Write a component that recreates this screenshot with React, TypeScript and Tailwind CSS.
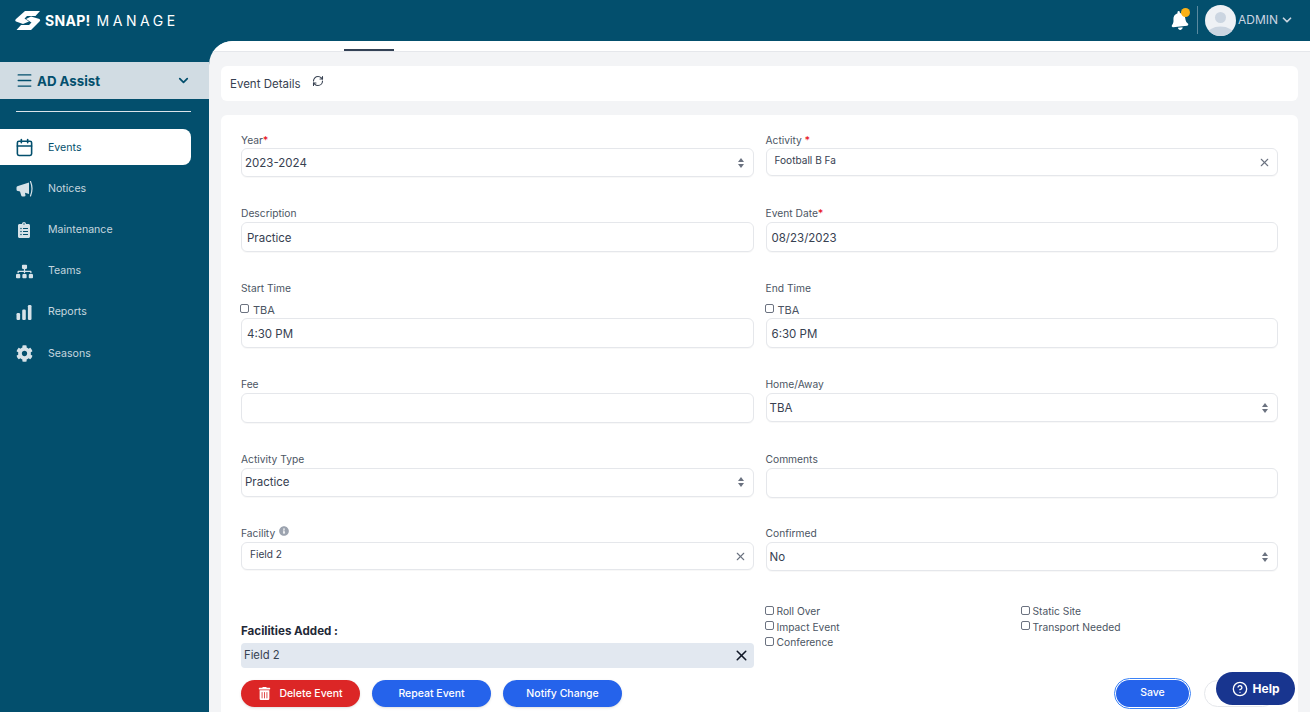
import { ReactNode } from "react";
import { Calendar, ChevronDown, CircleHelp, Menu, RefreshCw, X } from "lucide-react";
import { FaBell, FaClipboardList, FaCog, FaInfoCircle, FaSitemap, FaTrashAlt } from "react-icons/fa";

function Horn() {
  return (
    <svg width="17" height="16" viewBox="0 0 17 16" fill="currentColor">
      <path d="M0.5 6.5 Q0.5 5 2 5 L13 1.5 V13 L9 11.8 L9.5 14.5 Q9.5 15.5 8 15.5 L6.5 15.5 Q5.5 15.5 5.2 14.5 L4 10.5 L2 10 Q0.5 10 0.5 8.5 Z" />
      <path d="M14.5 0.5 Q17.5 7.5 14.5 15" fill="none" stroke="currentColor" strokeWidth="1.2" strokeLinecap="round" />
    </svg>
  );
}

function Bars() {
  return (
    <svg width="16" height="15" viewBox="0 0 16 15" fill="currentColor">
      <rect x="0.5" y="8" width="3.6" height="7" rx="1.2" />
      <rect x="6.2" y="4.5" width="3.6" height="10.5" rx="1.2" />
      <rect x="11.9" y="0" width="3.6" height="15" rx="1.2" />
    </svg>
  );
}

const navItems = [
  { label: "Notices", icon: <Horn /> },
  { label: "Maintenance", icon: <FaClipboardList size={16} /> },
  { label: "Teams", icon: <FaSitemap size={17} /> },
  { label: "Reports", icon: <Bars /> },
  { label: "Seasons", icon: <FaCog size={17} /> },
];

function Logo() {
  return (
    <svg width="26" height="19" viewBox="0 0 26 19" fill="white">
      <path d="M10 0 H25 L20.5 5 H12 L9.5 7.5 L14 10.5 L8 13 L1 10.5 Q-0.5 9.5 1 8 Z" />
      <path d="M16 5.5 L24.5 8 Q26 9 24.5 10.5 L16 19 H1.5 L6 14 H14 L16.5 11.5 L11 8 Z" />
    </svg>
  );
}

function Avatar() {
  return (
    <svg width="31" height="31" viewBox="0 0 31 31" className="rounded-full bg-[#eef1f5]">
      <circle cx="15.5" cy="12.5" r="5.5" fill="#cbd5e1" />
      <ellipse cx="15.5" cy="30" rx="13.5" ry="8.5" fill="#cbd5e1" />
    </svg>
  );
}

function Label({ text, required }: { text: string; required?: boolean }) {
  return (
    <label className="block pb-[1px] text-[10.25px] leading-[13px] text-[#4b5563]">
      {text}
      {required && <span className="text-red-600">*</span>}
    </label>
  );
}

function Box({ children, className }: { children?: ReactNode; className?: string }) {
  return (
    <div className={"flex items-center justify-between rounded-md border border-[#e5e7eb] bg-white text-[#374151] shadow-[0_1px_1px_rgba(0,0,0,0.03)] " + (className ?? "")}>
      {children}
    </div>
  );
}

function Input({ value }: { value?: string }) {
  return <Box className="h-[30px] px-[5px] pt-[3px] text-[11.5px]">{value}</Box>;
}

function TimeInput({ value }: { value: string }) {
  return <Box className="h-[30px] px-[5px] pt-[5px] text-[11.5px]">{value}</Box>;
}

function Select({ value }: { value: string }) {
  return (
    <Box className="h-[29px] pl-[3px] pr-[9px] text-[11.5px]">
      <span className="pt-[2px]">{value}</span>
      <svg width="6" height="10" viewBox="0 0 6 10" fill="#6b7280">
        <path d="M3 0 L6 4 H0 Z M3 10 L0 6 H6 Z" />
      </svg>
    </Box>
  );
}

function Combo({ value }: { value: string }) {
  return (
    <Box className="h-[28px] pl-[8px] pr-[6px] text-[10.1px]">
      <span className="-mt-[3px]">{value}</span>
      <X size={13} className="text-[#6b7280]" />
    </Box>
  );
}

function Check({ label, small }: { label: string; small?: boolean }) {
  return (
    <label className={"flex items-center text-[#4b5563] " + (small ? "h-[15.5px] gap-[3px] text-[10.25px]" : "h-[15px] gap-[4px] text-[11px]")}>
      <input type="checkbox" className="-ml-[1px] -mt-[3px] h-[9px] w-[9px] appearance-none rounded-[2px] border border-[#6b7280] bg-white" />
      {label}
    </label>
  );
}

function Field({ label, required, tight, children }: { label: string; required?: boolean; tight?: boolean; children: ReactNode }) {
  return (
    <div>
      <div className={tight ? "" : "mb-[1px]"}>
        <Label text={label} required={required} />
      </div>
      {children}
    </div>
  );
}

export default function App() {
  return (
    <div className="flex h-screen flex-col overflow-hidden bg-[#034f6d] font-['Inter',sans-serif]">
      <header className="flex h-[41px] shrink-0 items-center justify-between pb-[1px] pl-[15px] pr-[16px]">
        <div className="flex items-center gap-[4px] text-white">
          <Logo />
          <span className="text-[14px] font-bold tracking-[0.02em]">SNAP!</span>
          <span className="ml-[2px] text-[14px] font-normal tracking-[0.255em]">MANAGE</span>
        </div>
        <div className="flex items-center">
          <div className="relative mr-[8px] text-white">
            <FaBell size={19} className="-rotate-6" />
            <span className="absolute -right-[1px] -top-[3px] h-[9px] w-[9px] rounded-full bg-[#fbb116]" />
          </div>
          <div className="mr-[7px] h-[28px] w-px bg-[#5a8aa0]" />
          <Avatar />
          <span className="ml-[2px] text-[12px] text-[#cbd5e1]">ADMIN</span>
          <ChevronDown size={14} strokeWidth={3} className="ml-[2px] text-[#cbd5e1]" />
        </div>
      </header>

      <div className="flex min-h-0 flex-1">
        <aside className="w-[209px] shrink-0 pt-[21px]">
          <div className="flex h-[37px] items-center bg-[#d1dce3] pl-[15px] pr-[18px] text-[#034f6d]">
            <Menu size={19} strokeWidth={1.6} className="mr-[3px]" />
            <span className="pt-[2px] text-[13.25px] font-bold">AD Assist</span>
            <ChevronDown size={15} strokeWidth={2.8} className="ml-auto" />
          </div>
          <div className="ml-[16px] mr-[18px] mt-[12px] border-t border-[#dbe4ea]" />
          <nav className="mt-[17px] pr-[18px]">
            <a className="flex h-[36px] items-center rounded-r-lg bg-white pl-[15px] text-[10.6px] font-normal text-[#034f6d]">
              <Calendar size={19} strokeWidth={2} className="mr-[14px]" />
              <span className="pt-[1px]">Events</span>
            </a>
            <div className="mt-[3px] flex flex-col">
              {navItems.map((item) => (
                <a key={item.label} className="flex h-[41.25px] items-center text-[10.6px] font-normal text-[#c5d6df]">
                  <span className="flex w-[48px] justify-center pr-[0px] text-[#d7e2e8]">{item.icon}</span>
                  {item.label}
                </a>
              ))}
            </div>
          </nav>
        </aside>

        <main className="min-w-0 flex-1 overflow-hidden rounded-tl-[24px] bg-[#f3f4f6]">
          <div className="h-[11px] border-b border-[#e5e7eb] bg-white">
            <div className="ml-[135px] h-[10px] w-[50px] border-b-2 border-[#334155]" />
          </div>
          <div className="px-[12px] pt-[14px]">
            <div className="flex h-[35px] items-center gap-[11px] rounded-md bg-white pl-[9px] text-[11.5px] text-[#374151]">
              <span className="mt-[3px]">Event Details</span>
              <RefreshCw size={12} strokeWidth={2.2} className="-mt-[5px]" />
            </div>

            <section className="relative mt-[14px] h-[620px] rounded-t-md bg-white px-[20px] pt-[19px]">
              <div className="grid grid-cols-2 gap-x-[12px]">
                <div className="h-[73px]">
                  <Field label="Year" required tight>
                    <Select value="2023-2024" />
                  </Field>
                </div>
                <div className="h-[73px]">
                  <Field label="Activity " required tight>
                    <Combo value="Football B Fa" />
                  </Field>
                </div>

                <div className="h-[74.5px]">
                  <Field label="Description">
                    <Input value="Practice" />
                  </Field>
                </div>
                <div className="h-[74.5px]">
                  <Field label="Event Date" required>
                    <Input value="08/23/2023" />
                  </Field>
                </div>

                <div className="h-[96.5px]">
                  <Label text="Start Time" />
                  <div className="mt-[7px]">
                    <Check label="TBA" />
                  </div>
                  <TimeInput value="4:30 PM" />
                </div>
                <div className="h-[96.5px]">
                  <Label text="End Time" />
                  <div className="mt-[7px]">
                    <Check label="TBA" />
                  </div>
                  <TimeInput value="6:30 PM" />
                </div>

                <div className="h-[74.5px]">
                  <Field label="Fee">
                    <Input />
                  </Field>
                </div>
                <div className="h-[74.5px]">
                  <Field label="Home/Away">
                    <Select value="TBA" />
                  </Field>
                </div>

                <div className="h-[74.5px]">
                  <Field label="Activity Type">
                    <Select value="Practice" />
                  </Field>
                </div>
                <div className="h-[74.5px]">
                  <Field label="Comments">
                    <Input />
                  </Field>
                </div>

                <div>
                  <div className="mb-[1px] flex items-start gap-[4px]">
                    <Label text="Facility" />
                    <FaInfoCircle size={10} className="-mt-[1px] text-[#9ca3af]" />
                  </div>
                  <Combo value="Field 2" />
                  <h3 className="mt-[54px] text-[11.6px] font-bold leading-[14px] text-[#1f2937]">Facilities Added :</h3>
                  <div className="mt-[5px] flex h-[25px] items-center justify-between rounded-sm bg-[#e2e8f0] pl-[3px] pr-[4px] text-[11.25px] text-[#374151]">
                    Field 2
                    <X size={17} strokeWidth={2.2} className="text-[#111827]" />
                  </div>
                  <div className="mt-[12px] flex gap-[12px] text-[10.5px] font-medium text-white">
                    <button className="flex h-[27px] w-[119px] items-center justify-center gap-[8px] rounded-full bg-[#dc2626] shadow-sm">
                      <FaTrashAlt size={13} />
                      Delete Event
                    </button>
                    <button className="h-[27px] w-[119px] rounded-full bg-[#2563eb] shadow-sm">Repeat Event</button>
                    <button className="h-[27px] w-[119px] rounded-full bg-[#2563eb] shadow-sm">Notify Change</button>
                  </div>
                </div>

                <div>
                  <Field label="Confirmed">
                    <Select value="No" />
                  </Field>
                  <div className="mt-[33px] grid grid-cols-[256px_1fr]">
                    <div>
                      <Check small label="Roll Over" />
                      <Check small label="Impact Event" />
                      <Check small label="Conference" />
                    </div>
                    <div>
                      <Check small label="Static Site" />
                      <Check small label="Transport Needed" />
                    </div>
                  </div>
                  <div className="mt-[29px] flex justify-end gap-[15px] pr-[2px] text-[10.5px] font-medium">
                    <button className="h-[27px] w-[73px] rounded-full bg-[#2563eb] text-white outline-[1.5px] outline-offset-[1.5px] outline-[#3b82f6]">Save</button>
                    <button className="h-[27px] w-[72px] rounded-full border border-[#e5e7eb] bg-white text-[#374151]" />
                  </div>
                </div>
              </div>
            </section>
          </div>
        </main>
      </div>

      <button className="fixed bottom-[7px] right-[15px] flex h-[33px] w-[79px] items-center justify-center gap-[5px] rounded-full bg-[#18358f] text-[12px] font-bold text-white">
        <CircleHelp size={16} strokeWidth={2} />
        Help
      </button>
    </div>
  );
}
